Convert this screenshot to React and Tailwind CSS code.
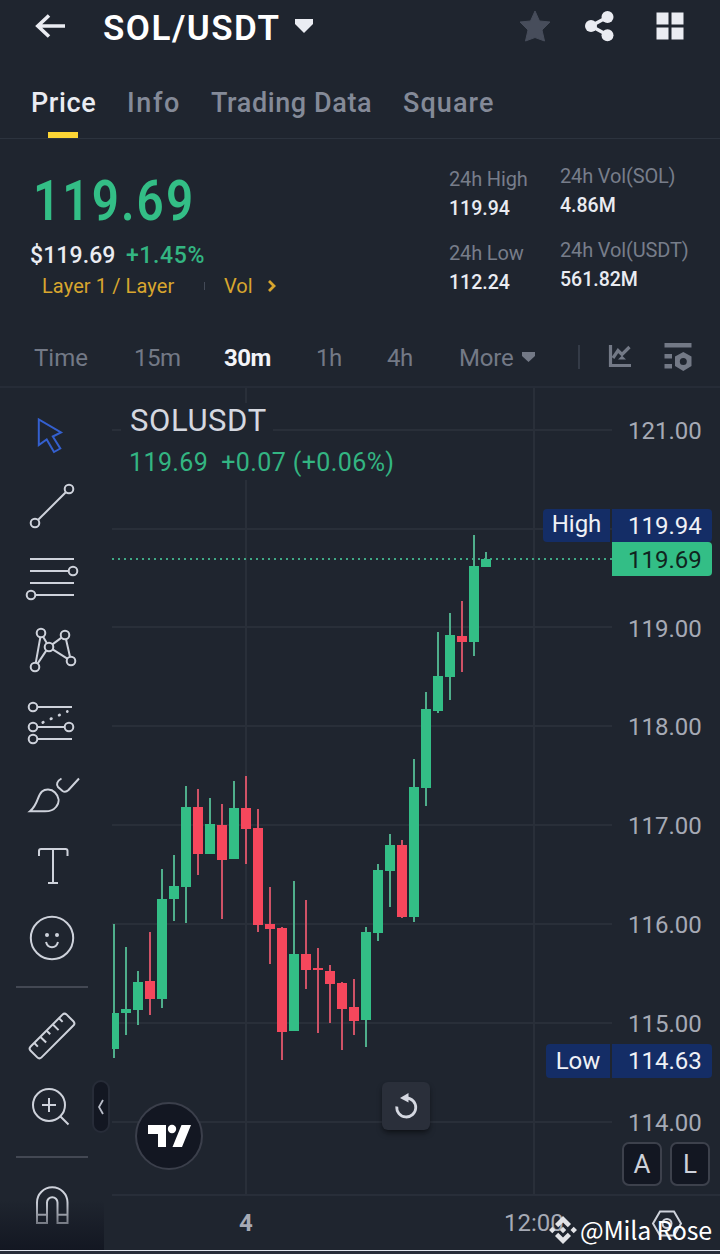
import React from "react";

// [bullish, high, low, bodyTop, bodyBottom] in chart pixels, one candle every 12px
const CANDLES = [
  [1, 924, 1058, 1013, 1049], [1, 947, 1035, 1009, 1013], [1, 971, 1025, 982, 1010],
  [0, 932, 1015, 981, 999], [1, 869, 1008, 899, 999], [1, 855, 921, 886, 899],
  [1, 786, 923, 807, 887], [0, 789, 875, 807, 854], [1, 798, 854, 824, 854],
  [0, 804, 919, 825, 860], [1, 781, 859, 808, 859], [0, 776, 864, 808, 829],
  [0, 809, 932, 828, 925], [0, 887, 964, 924, 929], [0, 927, 1060, 928, 1032],
  [1, 881, 1031, 954, 1031], [0, 900, 989, 954, 970], [0, 948, 1033, 968, 970],
  [0, 965, 1023, 971, 984], [0, 982, 1050, 983, 1009], [0, 979, 1035, 1007, 1021],
  [1, 927, 1047, 932, 1020], [1, 864, 941, 870, 933], [1, 834, 907, 845, 871],
  [0, 840, 918, 845, 917], [1, 759, 922, 787, 917], [1, 692, 806, 709, 788],
  [1, 632, 713, 676, 711], [1, 613, 700, 635, 677], [0, 601, 672, 636, 642],
  [1, 535, 656, 566, 642], [1, 552, 567, 559, 567],
];
const GRID_Y = [430, 529, 627, 726, 825, 924, 1023, 1122];
const AXIS = ["121.00", "", "119.00", "118.00", "117.00", "116.00", "115.00", "114.00"];

function Header() {
  return (
    <header className="flex h-[60px] items-center text-[#eaecf2]">
      <svg className="ml-[34px] -mt-[8px] h-[26px] w-[32px] shrink-0" viewBox="34 13 32 26" fill="none" stroke="currentColor" strokeWidth="3.6">
        <path d="M65 26H37M49 15.500L37.800 26L49 36.500" />
      </svg>
      <h1 className="-mt-[3px] ml-[37px] w-[178px] text-[35px] leading-[40px] font-semibold tracking-[1.5px] whitespace-nowrap text-white">SOL/USDT</h1>
      <svg className="-mt-[8px] ml-[13px] h-[16px] w-[20px]" viewBox="0 0 20 16" fill="currentColor">
        <path d="M1 1H19V6L10 15L1 6Z" />
      </svg>
      <svg className="-mt-[8px] ml-[205px] h-[32px] w-[32px] text-[#474d5b]" viewBox="519 10 32 32" fill="currentColor">
        <path d="M535 11L539.500 21L550 22L542 30L544.500 41L535 37.500L525.500 41L528 30L520 22L530.500 21Z" strokeLinejoin="round" stroke="currentColor" strokeWidth="1" />
      </svg>
      <svg className="-mt-[8px] ml-[33px] h-[32px] w-[30px]" viewBox="584 10 30 32" fill="currentColor" stroke="currentColor">
        <path d="M607.500 17L591 26L607.500 35" fill="none" strokeWidth="3.500" />
        <g stroke="none"><circle cx="607.500" cy="17" r="6" /><circle cx="591" cy="26" r="6" /><circle cx="607.500" cy="35.200" r="6" /></g>
      </svg>
      <svg className="-mt-[8px] ml-[42px] h-[28px] w-[28px]" viewBox="656 12 28 28" fill="currentColor">
        <path d="M656.500 12.500h12v12h-12zM671.500 12.500h12v12h-12zM656.500 27.500h12v12h-12zM671.500 27.500h12v12h-12z" />
      </svg>
    </header>
  );
}

function Tabs() {
  return (
    <nav className="flex h-[79px] items-start border-b border-[#2c333e] pt-[27px] text-[27px] leading-[33px] font-medium text-[#848a98]">
      <div className="ml-[31px] flex w-[96px] flex-col text-[#eaecf2]">
        <span className="tracking-[0.6px]">Price</span>
        <span className="mt-[12px] ml-[17px] h-[6px] w-[30px] bg-[#fcd535]" />
      </div>
      <span className="w-[84px] tracking-[1.6px]">Info</span>
      <span className="w-[192px] tracking-[0.6px] whitespace-nowrap">Trading Data</span>
      <span className="tracking-[1.1px]">Square</span>
    </nav>
  );
}

function Stat({ label, value }) {
  return (
    <div className="flex h-[74px] flex-col text-[20px] leading-[29px] tracking-[-0.15px] whitespace-nowrap">
      <span className="text-[#777d8a]">{label}</span>
      <span className="text-[19.500px] font-medium tracking-[0px] text-[#eaecf2]">{value}</span>
    </div>
  );
}

function Summary() {
  return (
    <section className="flex h-[191px]">
      <div className="flex w-[449px] flex-col">
        <div className="mt-[28px] ml-[33px] h-[68px] w-[190px] origin-left scale-x-[0.85] text-[56px] leading-[68px] font-semibold tracking-[2.500px] text-[#33be86]">119.69</div>
        <div className="mt-[7px] ml-[30px] flex h-[28px] text-[23px] leading-[28px] font-medium">
          <span className="w-[96px] tracking-[0.1px] text-[#eaecf2]">$119.69</span>
          <span className="tracking-[0.6px] text-[#33b582]">+1.45%</span>
        </div>
        <div className="mt-[3px] ml-[42px] flex h-[26px] items-center text-[20px] leading-[26px] text-[#d8a62e]">
          <span className="w-[162px] tracking-[0.1px]">Layer 1 / Layer</span>
          <span className="h-[8px] w-px bg-[#434a57]" />
          <span className="ml-[19px] w-[43px]">Vol</span>
          <svg className="h-[14px] w-[10px]" viewBox="0 0 10 14" fill="none" stroke="currentColor" strokeWidth="2.800"><path d="M2 2L7 7L2 12" /></svg>
        </div>
      </div>
      <div className="w-[111px] pt-[26px]">
        <Stat label="24h High" value="119.94" />
        <Stat label="24h Low" value="112.24" />
      </div>
      <div className="pt-[23px]">
        <Stat label="24h Vol(SOL)" value="4.86M" />
        <Stat label="24h Vol(USDT)" value="561.82M" />
      </div>
    </section>
  );
}

function Timeframes() {
  return (
    <nav className="flex h-[58px] items-center border-b-2 border-[#262c37] text-[24px] text-[#737986]">
      <span className="ml-[34px] w-[100px]">Time</span>
      <span className="w-[90px] tracking-[-0.5px]">15m</span>
      <span className="w-[92px] font-bold tracking-[-0.5px] text-[#f3f4f8]">30m</span>
      <span className="w-[71px] tracking-[-0.5px]">1h</span>
      <span className="w-[72px] tracking-[-0.5px]">4h</span>
      <span className="w-[63px] tracking-[-0.2px]">More</span>
      <svg className="-mt-[3px] h-[10px] w-[13px]" viewBox="0 0 13 10" fill="currentColor"><path d="M0 0H13V4L6.500 10L0 4Z" /></svg>
      <span className="-mt-[2px] ml-[43px] h-[24px] w-[2px] bg-[#343b47]" />
      <svg className="-mt-[4px] ml-[28px] h-[24px] w-[24px]" viewBox="608 344 24 24" fill="none" stroke="currentColor" strokeWidth="3.200">
        <path d="M610.500 345V365.500H631M613 358L618 350.500L622 354.500L629.500 347" />
        <path d="M618 359.500L622 355.500L626 359.500Z" fill="currentColor" stroke="none" />
      </svg>
      <svg className="-mt-[2px] ml-[32px] h-[30px] w-[28px]" viewBox="664 342 28 30" fill="currentColor">
        <path d="M664.500 343h27v4.500h-27zM664.500 354h7.500v4.500h-7.500zM664.500 364h7.500v4.500h-7.500z" />
        <path fillRule="evenodd" d="M683.300 352L691.500 356.500V366L683.300 371L675 366V356.500ZM683.300 358A3.500 3.500 0 1 0 683.300 365A3.500 3.500 0 1 0 683.300 358Z" />
      </svg>
    </nav>
  );
}

function Tool({ y, children, className = "text-[#ced2db]" }) {
  return (
    <svg className={"block h-[72px] w-[104px] shrink-0 " + className} viewBox={`0 ${y} 104 72`} fill="none" stroke="currentColor" strokeWidth="2">
      {children}
    </svg>
  );
}

function Divider({ className }) {
  return (
    <div className={"flex shrink-0 items-center pl-[16px] " + className}>
      <span className="h-[2px] w-[72px] bg-[#434853]" />
    </div>
  );
}

function Toolbar() {
  return (
    <aside className="relative flex w-[104px] shrink-0 flex-col pt-[12px]">
      <Tool y={400} className="text-[#3460cf]">
        <path d="M38.800 419.500V445L46.700 439.500L54 452L60.300 448.500L52.800 436.500L61 432.500Z" strokeWidth="2" />
      </Tool>
      <Tool y={472}>
        <circle cx="35" cy="523" r="4.300" /><circle cx="69" cy="489" r="4.300" /><path d="M38.200 519.800L65.800 492.200" />
      </Tool>
      <Tool y={544}>
        <path d="M30 559H74M30 571H68.500M30 583H74M35.500 595H74" /><circle cx="73" cy="571" r="4.300" /><circle cx="31" cy="595" r="4.300" />
      </Tool>
      <Tool y={616}>
        <circle cx="41" cy="633" r="4.300" /><circle cx="65" cy="635" r="4.300" /><circle cx="49" cy="647" r="4.300" /><circle cx="71" cy="661" r="4.300" /><circle cx="35" cy="667" r="4.300" />
        <path d="M35.800 662.700L40.300 637.300M43.100 636.700L46.900 643.300M37.600 663.600L46.400 650.400M52.400 644.400L61.600 637.600M66 639.200L70 656.800M52.700 649.300L67.300 658.700" />
      </Tool>
      <Tool y={688}>
        <circle cx="33" cy="707" r="4.300" /><circle cx="33" cy="727" r="4.300" /><circle cx="69" cy="727" r="4.300" /><circle cx="33" cy="739" r="4.300" />
        <path d="M37.500 707H72M37.500 727H64.500M37.500 739H72" />
        <path d="M42.800 722.500L67.300 711.500" strokeWidth="2.800" strokeLinecap="round" strokeDasharray="0.500 8.450" />
      </Tool>
      <Tool y={760}>
        <path d="M30 811.300C38.500 804 37 796 42 791.500C45 789 51 788.500 55 792.500C59 796.500 60 802 56 807C53.500 810.200 49.500 811.300 45 811.300Z" />
        <path d="M61.500 778.500C57 781 56 784.500 58 787L62.500 791Q65.500 793 68.500 790L79 778.500" />
      </Tool>
      <Tool y={832}>
        <path d="M39 856V851Q39 849 41 849H65.500Q67.500 849 67.500 851V856M53 849V883M48 883H58" />
      </Tool>
      <Tool y={904}>
        <circle cx="52" cy="938" r="21.200" /><circle cx="47" cy="935" r="2" fill="currentColor" stroke="none" /><circle cx="57" cy="935" r="2" fill="currentColor" stroke="none" /><path d="M46 942C48 949 56 949 58 942" />
      </Tool>
      <Divider className="h-[22px]" />
      <Tool y={998}>
        <g transform="rotate(-45 52 1036)">
          <rect x="26.500" y="1028.300" width="51" height="15.400" rx="3" />
          <path d="M34.500 1028.500v5M43.200 1028.500v8M52 1028.500v5M60.800 1028.500v8M69.500 1028.500v5" />
        </g>
      </Tool>
      <Tool y={1070}>
        <circle cx="49" cy="1105" r="16" /><path d="M42 1105H56M49 1098V1112M60.500 1116.500L68.500 1124.500" />
      </Tool>
      <Divider className="h-[30px]" />
      <Tool y={1172}>
        <path d="M37 1223V1202.500A15.250 15.250 0 0 1 67.500 1202.500V1223H57.500V1202.500A5.250 5.250 0 0 0 47 1202.500V1223ZM37 1214.700H47M57.500 1214.700H67.500" />
      </Tool>
      <div className="absolute bottom-0 left-0 h-[50px] w-[104px] bg-gradient-to-b from-transparent to-[#131722]" />
      <div className="absolute top-[692px] left-[92px] z-10 flex h-[53px] w-[18px] items-center justify-center rounded-[9px] border-2 border-[#272c38] bg-[#131722]">
        <svg className="h-[16px] w-[6px]" viewBox="0 0 6 16" fill="none" stroke="#b9bdc8" strokeWidth="1.800"><path d="M5 1L1 8L5 15" /></svg>
      </div>
    </aside>
  );
}

function Chart() {
  return (
    <div className="relative h-[806px] w-[508px] shrink-0">
      <svg className="block h-[806px] w-[508px]" viewBox="104 388 508 806" shapeRendering="crispEdges">
        <g fill="#292f39">
          {GRID_Y.map((y) => <rect key={y} x="112" y={y - 1} width="500" height="2" />)}
          <rect x="245" y="388" width="2" height="806" /><rect x="533" y="388" width="2" height="806" />
        </g>
        <path d="M112 559H612" stroke="#3fa985" strokeWidth="2" strokeDasharray="2 4" />
        {CANDLES.map(([up, high, low, top, bottom], i) => {
          const x = 114 + i * 12;
          const left = Math.max(112, x - 5);
          return (
            <g key={i}>
              <rect x={x - 1} y={high} width="2" height={low - high} fill={up ? "#4fae8b" : "#cf5266"} />
              <rect x={left} y={top} width={x + 5 - left} height={bottom - top} fill={up ? "#33be86" : "#f5475c"} />
            </g>
          );
        })}
      </svg>
      <div className="absolute top-[15px] left-[17px] flex flex-col bg-[#1f252f] pr-[6px] pb-[6px] pl-[9px]">
        <span className="text-[31px] leading-[36px] tracking-[0.600px] text-[#d5d8e0]">SOLUSDT</span>
      </div>
      <div className="absolute top-[57px] left-[17px] flex gap-[13px] bg-[#1f252f] pt-[4px] pr-[4px] pb-[3px] pl-[8px] text-[25px] leading-[28px] tracking-[0.400px] whitespace-nowrap text-[#33b582]">
        <span>119.69</span><span>+0.07 (+0.06%)</span>
      </div>
      <div className="absolute top-[714px] left-[31px] flex h-[68px] w-[68px] items-center justify-center rounded-full border-2 border-[#3b3f4b] bg-[#131722]">
        <svg className="h-[24px] w-[44px]" viewBox="147 1125 44 24" fill="#fff"><path d="M148 1126H166V1148H158V1135H148ZM181.500 1126H191L182 1148H172.500Z" /><circle cx="172" cy="1130" r="4.200" /></svg>
      </div>
      <div className="absolute top-[694px] left-[278px] flex h-[48px] w-[48px] items-center justify-center rounded-[6px] bg-[#2a2f3a] shadow-md shadow-black/40">
        <svg className="h-[28px] w-[26px]" viewBox="393 1093 26 28" fill="none" stroke="#d5d8e1" strokeWidth="2.800">
          <path d="M396.800 1107.500A9.500 9.500 0 1 0 406.500 1099" /><path d="M400 1099L408.500 1094V1103.500Z" fill="#d5d8e1" stroke="none" />
        </svg>
      </div>
      <div className="absolute top-[121px] right-[2px] flex h-[33px] w-[67px] items-center justify-center rounded-l-[4px] bg-[#142d66] pb-[3px] text-[24px] text-[#eff1f6]">High</div>
      <div className="absolute top-[656px] right-[2px] flex h-[34px] w-[64px] items-center justify-center rounded-l-[4px] bg-[#142d66] text-[24px] text-[#eff1f6]">Low</div>
    </div>
  );
}

function PriceAxis() {
  return (
    <div className="relative flex h-[806px] grow flex-col pt-[31px] pl-[16px] text-[24px] leading-[24px] text-[#a6aab5]">
      {AXIS.map((v, i) => <span key={i} className="h-[98.800px] shrink-0">{v}</span>)}
      <div className="absolute top-[121px] left-0 flex h-[33px] w-[100px] items-center rounded-r-[4px] bg-[#142d66] pl-[16px] text-[#eff1f6]">119.94</div>
      <div className="absolute top-[154px] left-0 flex h-[34px] w-[100px] items-center rounded-r-[4px] bg-[#33be86] pt-[1px] pl-[16px] text-[#10241e]">119.69</div>
      <div className="absolute top-[656px] left-0 flex h-[34px] w-[100px] items-center rounded-r-[4px] bg-[#142d66] pl-[16px] text-[#eff1f6]">114.63</div>
      <div className="absolute top-[754px] left-[10px] flex gap-[8px] text-[26px] text-[#ced1da]">
        <span className="flex h-[44px] w-[40px] items-center justify-center rounded-[7px] border-2 border-[#3d414c] bg-[#131722]">A</span>
        <span className="flex h-[44px] w-[40px] items-center justify-center rounded-[7px] border-2 border-[#3d414c] bg-[#131722]">L</span>
      </div>
    </div>
  );
}

function TimeAxis() {
  return (
    <div className="relative ml-[8px] h-[56px] border-t-2 border-[#282e39] text-[24px] leading-[28px] text-[#a6aab5]">
      <div className="flex pt-[13px]">
        <span className="ml-[127px] w-[265px] font-bold">4</span>
        <span>12:00</span>
      </div>
      <svg className="absolute top-[11px] left-[538px] h-[32px] w-[34px]" viewBox="650 1206 34 32" fill="none" stroke="#ced2db" strokeWidth="2">
        <path d="M660 1210.500H674L681 1222.500L674 1234.500H660L653 1222.500Z" /><circle cx="667" cy="1222.500" r="4.500" />
      </svg>
      <div className="absolute top-[19px] left-[437px] flex items-center gap-[3px] whitespace-nowrap text-white">
        <svg className="h-[28px] w-[28px]" viewBox="0 0 28 28" fill="#e2e3e7">
          <path d="M14 0L22 8L18.800 11.200L14 6.400L9.200 11.200L6 8ZM14 28L22 20L18.800 16.800L14 21.600L9.200 16.800L6 20ZM14 10.800L17.200 14L14 17.200L10.800 14ZM3.300 10.800L6.500 14L3.300 17.200L0 14ZM24.700 10.800L28 14L24.700 17.200L21.500 14Z" />
        </svg>
        <span className="-mt-[1px] font-['Noto_Sans_CJK_SC',sans-serif] text-[25px] leading-[30px] tracking-[-0.200px]">@Mila Rose</span>
      </div>
    </div>
  );
}

export default function App() {
  return (
    <main className="flex h-[1254px] w-[720px] flex-col overflow-hidden bg-[#1f252f] font-['Roboto',sans-serif]">
      <Header />
      <Tabs />
      <Summary />
      <Timeframes />
      <div className="flex h-[862px] shrink-0">
        <Toolbar />
        <div className="flex grow flex-col">
          <div className="flex"><Chart /><PriceAxis /></div>
          <TimeAxis />
        </div>
      </div>
      <div className="h-[4px] shrink-0 border-t border-[#e0e2ea] bg-[#282c38]" />
    </main>
  );
}
